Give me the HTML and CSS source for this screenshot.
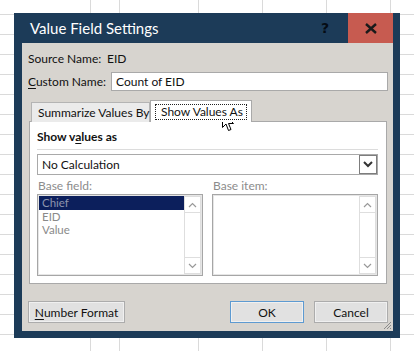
FILE: index.html
```html
<!DOCTYPE html>
<html lang="en">
<head>
    <meta charset="UTF-8">
    <title>Value Field Settings</title>
    <link rel="stylesheet" href="styles.css">
</head>
<body>
<div class="dialog">
    <div class="titlebar">
        <span class="title">Value Field Settings</span>
        <span class="help">?</span>
        <span class="close">
            <svg width="12" height="11" viewBox="0 0 12 11"><path d="M1 1 L11 10 M11 1 L1 10" stroke="#1a1a1a" stroke-width="2.4"/></svg>
        </span>
    </div>
    <div class="client">
        <div class="row">
            <span class="label">Source Name:</span>
            <span>EID</span>
        </div>
        <div class="row name-row">
            <span class="label"><u>C</u>ustom Name:</span>
            <div class="textbox">Count of EID</div>
        </div>

        <div class="tabs">
            <div class="tab">Summarize Values By</div>
            <div class="tab active"><span class="focus">Show Values As</span></div>
        </div>
        <div class="panel">
            <div class="heading">Show v<u>a</u>lues as</div>
            <div class="rule"></div>
            <div class="combo">
                <span>No Calculation</span>
                <span class="combo-btn">
                    <svg width="10" height="7" viewBox="0 0 10 7"><path d="M1 1 L5 5 L9 1" fill="none" stroke="#333" stroke-width="2"/></svg>
                </span>
            </div>
            <div class="bases">
                <div class="base">
                    <div class="base-label">Base field:</div>
                    <div class="listbox">
                        <div class="items">
                            <div class="item selected">Chief</div>
                            <div class="item">EID</div>
                            <div class="item">Value</div>
                        </div>
                        <div class="scrollbar">
                            <span class="arrow"><svg width="9" height="6" viewBox="0 0 9 6"><path d="M1 5 L4.5 1.5 L8 5" fill="none" stroke="#999" stroke-width="1.2"/></svg></span>
                            <span class="arrow"><svg width="9" height="6" viewBox="0 0 9 6"><path d="M1 1 L4.5 4.5 L8 1" fill="none" stroke="#999" stroke-width="1.2"/></svg></span>
                        </div>
                    </div>
                </div>
                <div class="base">
                    <div class="base-label">Base item:</div>
                    <div class="listbox">
                        <div class="items"></div>
                        <div class="scrollbar">
                            <span class="arrow"><svg width="9" height="6" viewBox="0 0 9 6"><path d="M1 5 L4.5 1.5 L8 5" fill="none" stroke="#999" stroke-width="1.2"/></svg></span>
                            <span class="arrow"><svg width="9" height="6" viewBox="0 0 9 6"><path d="M1 1 L4.5 4.5 L8 1" fill="none" stroke="#999" stroke-width="1.2"/></svg></span>
                        </div>
                    </div>
                </div>
            </div>
        </div>

        <div class="buttons">
            <div class="button wide"><u>N</u>umber Format</div>
            <div class="spacer"></div>
            <div class="button default">OK</div>
            <div class="button">Cancel</div>
        </div>
        <svg class="grip" width="9" height="9" viewBox="0 0 9 9"><path d="M8 1 L1 8 M8 4 L4 8 M8 7 L7 8" stroke="#8a8a8a" stroke-width="1"/></svg>
    </div>
</div>
<svg class="pointer" width="13" height="20" viewBox="0 0 13 20"><path d="M0.5 0.5 L0.5 15.5 L4 12 L6.5 18.5 L9 17.5 L6.5 11.5 L11.5 11.5 Z" fill="#fff" stroke="#000" stroke-width="1"/></svg>
</body>
</html>
```
FILE: styles.css
```css
* {
    box-sizing: border-box;
}

body {
    margin: 0;
    width: 414px;
    height: 351px;
    overflow: hidden;
    position: relative;
    font-family: Lato, "Noto Sans", sans-serif;
    font-size: 12px;
    color: #111;
    white-space: nowrap;
    background-color: #fff;
    /* excel gridlines behind the dialog */
    background-image:
        linear-gradient(#dadada, #dadada),
        linear-gradient(#dadada, #dadada),
        linear-gradient(#dadada, #dadada),
        linear-gradient(#dadada, #dadada),
        linear-gradient(#dadada, #dadada),
        linear-gradient(#dadada, #dadada),
        linear-gradient(to bottom, #dadada 1px, transparent 1px);
    background-size: 1px 100%, 1px 100%, 1px 100%, 1px 100%, 1px 100%, 1px 100%, 100% 20px;
    background-position: 90px 0, 119px 0, 198px 0, 262px 0, 326px 0, 390px 0, 0 14px;
    background-repeat: no-repeat, no-repeat, no-repeat, no-repeat, no-repeat, no-repeat, repeat-y;
}

u {
    text-decoration-thickness: 1px;
    text-underline-offset: 2px;
}

.dialog {
    margin: 13px 0 0 14px;
    width: 386px;
    height: 325px;
    background: #1c3b58;
    padding: 0 7px 7px 8px;
    display: flex;
    flex-direction: column;
}

.titlebar {
    height: 30px;
    display: flex;
    align-items: center;
}

.title {
    flex: 1;
    padding-left: 8px;
    color: #fff;
    font-size: 15px;
}

.help {
    color: #050c14;
    font-family: "DejaVu Sans", sans-serif;
    font-weight: bold;
    font-size: 14px;
    margin-right: 19px;
}

.close {
    width: 45px;
    height: 30px;
    background: #c75b50;
    display: flex;
    align-items: center;
    justify-content: center;
}

.client {
    flex: 1;
    background: #d7d4cf;
    padding: 6px 5px 0 6px;
    position: relative;
}

.row {
    height: 18px;
    display: flex;
    align-items: center;
}

.label {
    width: 79px;
    flex-shrink: 0;
}

.name-row {
    margin-top: 5px;
    height: 19px;
}

.name-row .label {
    width: 83px;
}

.textbox {
    flex: 1;
    height: 19px;
    background: #fff;
    border: 1px solid #a9a9a9;
    padding: 0 4px;
    display: flex;
    align-items: center;
}

.tabs {
    margin-top: 9px;
    margin-left: 3px;
    height: 22px;
    display: flex;
    align-items: flex-end;
    position: relative;
    z-index: 1;
}

.tab {
    height: 20px;
    width: 119px;
    padding-left: 6px;
    background: #ebebeb;
    border: 1px solid #b4b4b4;
    border-bottom: none;
    display: flex;
    align-items: center;
}

.tab.active {
    width: 102px;
    height: 22px;
    background: #fff;
    border-color: #a9a9a9;
    padding: 0 4px;
}

.focus {
    border: 1px dotted #222;
    padding: 0 5px;
    width: 92px;
    height: 16px;
    display: flex;
    align-items: center;
}

.panel {
    margin-left: 1px;
    width: 358px;
    height: 163px;
    margin-top: -1px;
    background: #fff;
    border: 1px solid #a9a9a9;
    padding: 6px 8px 0 7px;
}

.heading {
    font-weight: bold;
    height: 17px;
    line-height: 17px;
}

.rule {
    margin-top: 4px;
    height: 1px;
    background: #dcdcdc;
}

.combo {
    margin-top: 4px;
    height: 21px;
    border: 1px solid #a9a9a9;
    display: flex;
    align-items: center;
    padding-left: 4px;
}

.combo span:first-child {
    flex: 1;
}

.combo-btn {
    width: 18px;
    height: 19px;
    border: 1px solid #7d7d7d;
    display: flex;
    align-items: center;
    justify-content: center;
}

.bases {
    display: flex;
    gap: 9px;
}

.base {
    flex: 1;
}

.base-label {
    color: #8c8c8c;
    height: 19px;
    line-height: 21px;
    padding-left: 1px;
}

.listbox {
    height: 82px;
    border: 1px solid #a6a6a6;
    box-shadow: inset 0 0 0 1px #e6e6e6;
    display: flex;
    padding: 1px;
}

.items {
    flex: 1;
    color: #8a8a8a;
    font-size: 11.5px;
}

.item {
    height: 13.5px;
    line-height: 13.5px;
    padding-left: 3px;
}

.item.selected {
    background: #0c1f5c;
    color: #8d94ad;
}

.scrollbar {
    width: 17px;
    border: 1px solid #dedede;
    display: flex;
    flex-direction: column;
    justify-content: space-between;
}

.arrow {
    height: 17px;
    border: 1px solid #dedede;
    margin: -1px;
    display: flex;
    align-items: center;
    justify-content: center;
}

.buttons {
    margin-top: 17px;
    display: flex;
    gap: 10px;
}

.spacer {
    flex: 1;
}

.button {
    width: 74px;
    height: 22px;
    background: #e1e1e1;
    border: 1px solid #acacac;
    box-shadow: inset 0 0 0 1px #f0f0f0;
    display: flex;
    align-items: center;
    justify-content: center;
}

.button.wide {
    width: 97px;
}

.button.default {
    border-color: #5d9ad1;
}

.grip {
    position: absolute;
    right: 1px;
    bottom: 1px;
}

.pointer {
    position: absolute;
    left: 222px;
    top: 112px;
}
```
